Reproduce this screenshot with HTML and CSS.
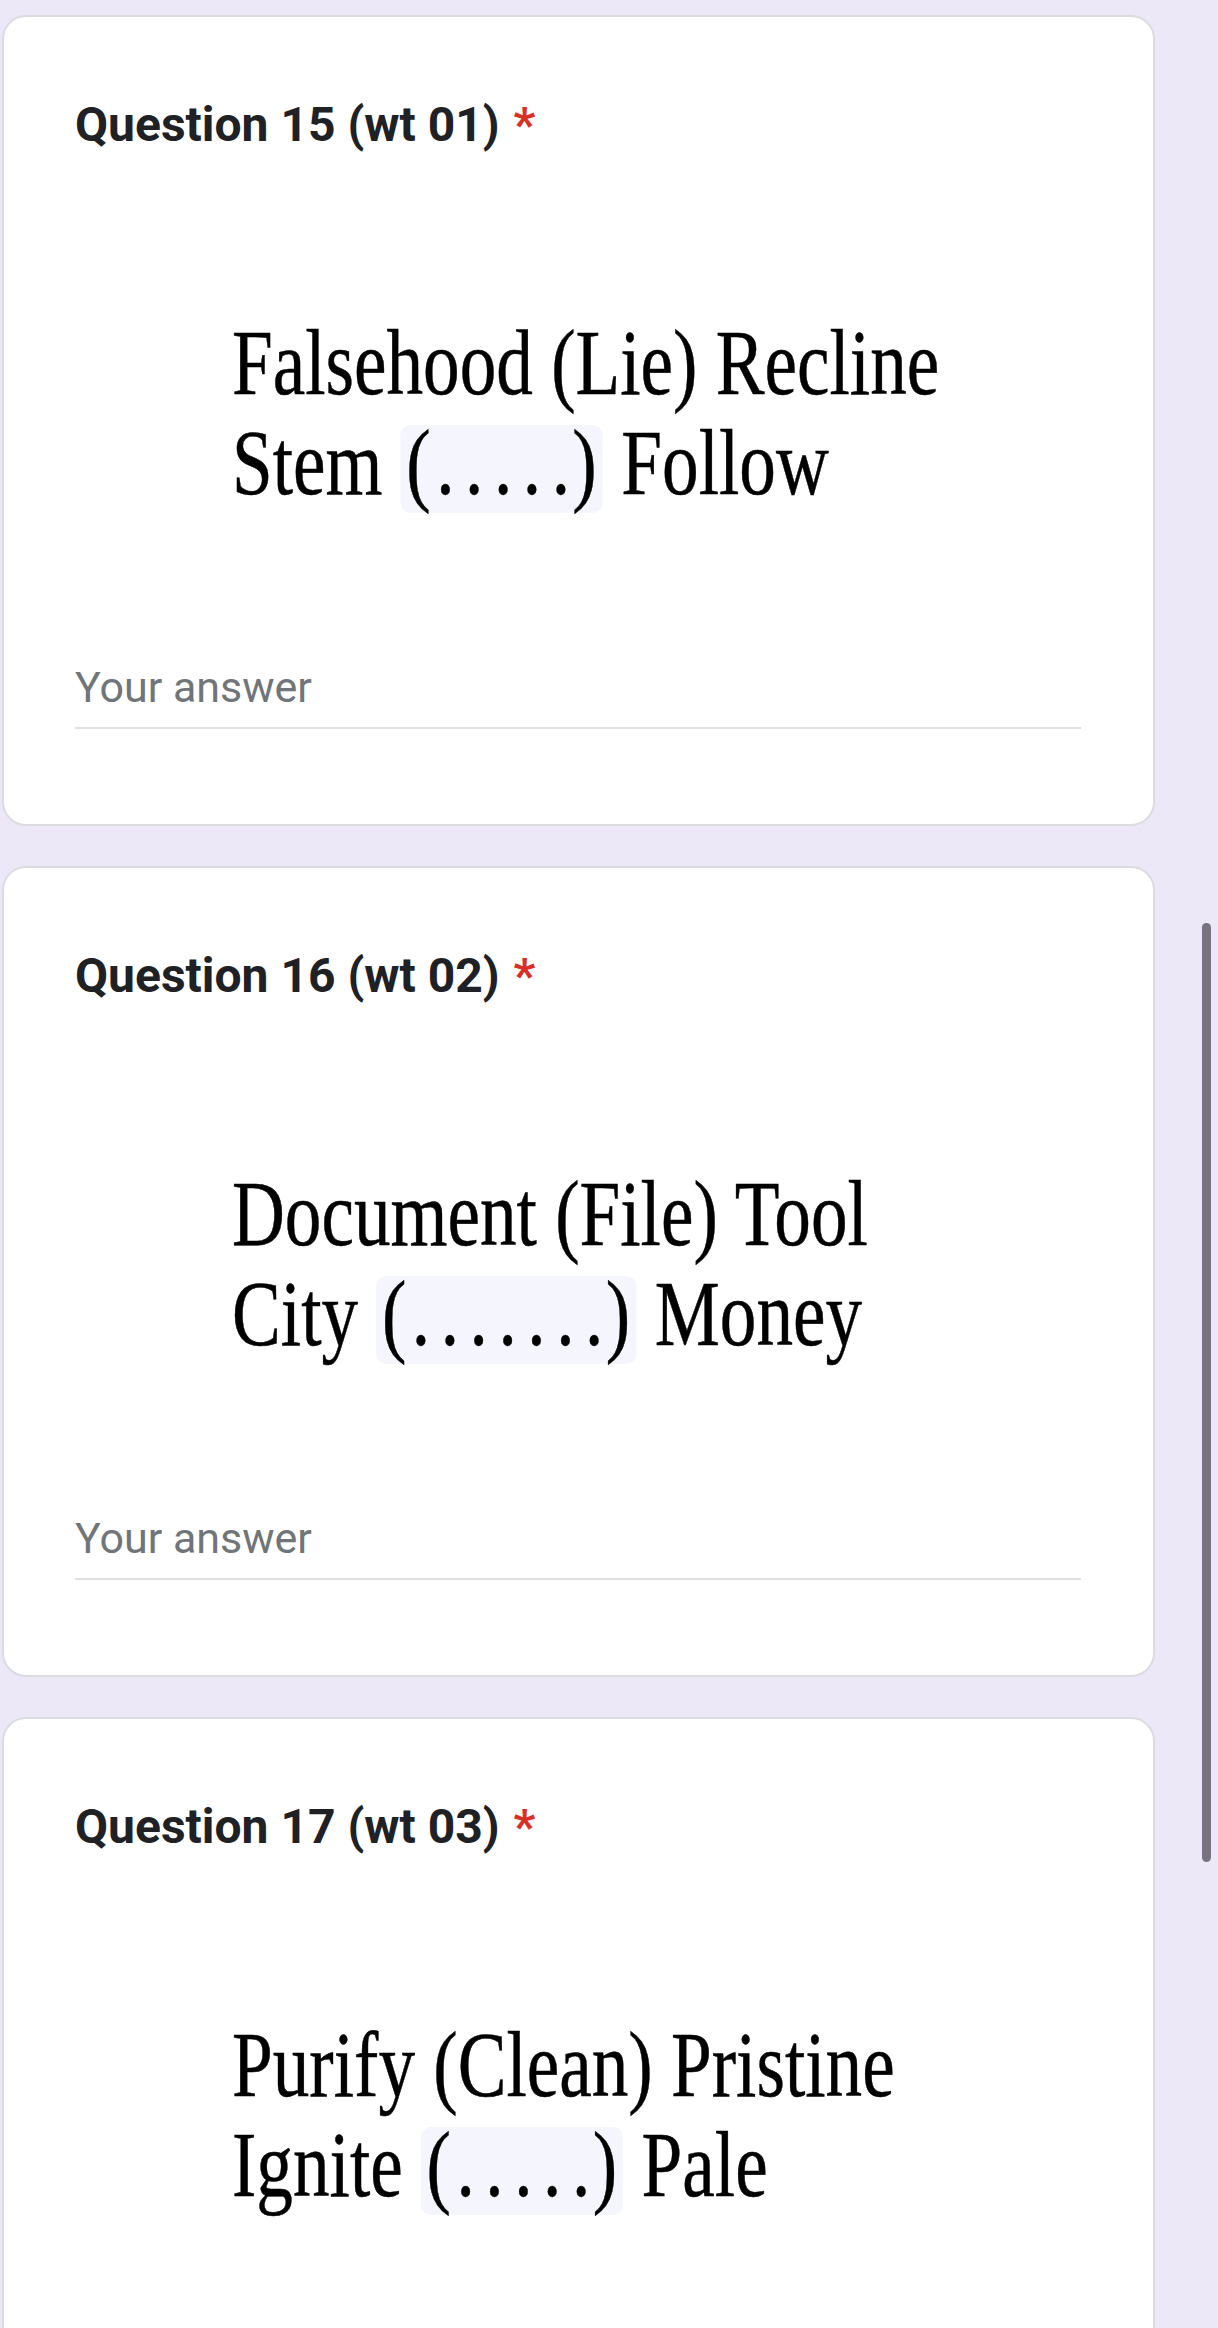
FILE: index.html
```html
<!DOCTYPE html>
<html lang="en">
<head>
<meta charset="utf-8">
<title>Questions</title>
<link rel="stylesheet" href="styles.css">
</head>
<body>
<main class="form">
  <section class="card">
    <h2 class="q-title">Question 15 (wt 01)<span class="req">*</span></h2>
    <div class="prompt">
      <div class="prompt-line">Falsehood (Lie) Recline</div>
      <div class="prompt-line">Stem <span class="blank">(<span class="dots">. . . . .</span>)</span> Follow</div>
    </div>
    <div class="answer">Your answer</div>
  </section>
  <section class="card">
    <h2 class="q-title">Question 16 (wt 02)<span class="req">*</span></h2>
    <div class="prompt">
      <div class="prompt-line">Document (File) Tool</div>
      <div class="prompt-line">City <span class="blank">(<span class="dots">. . . . . . .</span>)</span> Money</div>
    </div>
    <div class="answer">Your answer</div>
  </section>
  <section class="card">
    <h2 class="q-title">Question 17 (wt 03)<span class="req">*</span></h2>
    <div class="prompt">
      <div class="prompt-line">Purify (Clean) Pristine</div>
      <div class="prompt-line">Ignite <span class="blank">(<span class="dots">. . . . .</span>)</span> Pale</div>
    </div>
    <div class="answer">Your answer</div>
  </section>
</main>
<div class="scrollbar"></div>
</body>
</html>
```
FILE: styles.css
```css
html, body {
  margin: 0;
  padding: 0;
  height: 100%;
  overflow: hidden;
  background: #ede8f7;
}

body {
  position: relative;
  font-family: Roboto, "Noto Sans", "Liberation Sans", Arial, sans-serif;
}

.form {
  display: flex;
  flex-direction: column;
  gap: 40px;
  width: 1153px;
  padding: 15px 0 0 2px;
}

.card {
  box-sizing: border-box;
  background: #ffffff;
  border: 2px solid #dadce0;
  border-radius: 24px;
  padding: 72px 72px 95px 71px;
}

.q-title {
  margin: 0;
  font-size: 48px;
  line-height: 72px;
  font-weight: 700;
  color: #202124;
}

.req {
  color: #d93025;
  padding-left: 14px;
}

.prompt {
  margin-top: 152px;
  margin-left: 157px;
  font-family: "Liberation Serif", "Times New Roman", serif;
  font-size: 93px;
  line-height: 100px;
  color: #000000;
  -webkit-text-stroke: 0.5px #000000;
  transform: scaleX(0.787);
  transform-origin: left top;
}

.prompt-line {
  white-space: nowrap;
}

.blank {
  display: inline-block;
  height: 88px;
  line-height: 76px;
  padding: 0 8px 0 7px;
  background: #f4f5fd;
  border-radius: 13px / 10px;
}

.dots {
  word-spacing: -9.8px;
  margin: 0 3px 0 7px;
}

.answer {
  margin-top: 144px;
  font-size: 43px;
  line-height: 60px;
  color: #70757a;
  padding-bottom: 10px;
  border-bottom: 2px solid #e0e0e0;
}

.scrollbar {
  position: absolute;
  left: 1202px;
  top: 923px;
  width: 9px;
  height: 939px;
  border-radius: 5px;
  background: #78737f;
}
```
